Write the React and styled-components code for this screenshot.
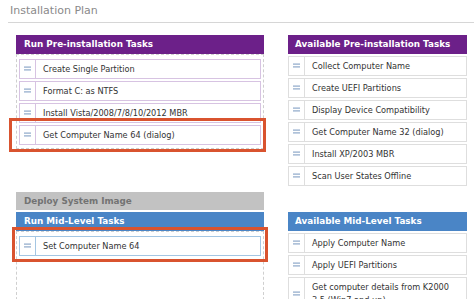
import React from "react";
import styled, { createGlobalStyle } from "styled-components";

const GlobalStyle = createGlobalStyle`
  html, body { margin: 0; padding: 0; background: #fff; }
  body { width: 474px; height: 299px; overflow: hidden; }
  * { box-sizing: border-box; }
`;

const Page = styled.div`
  position: relative;
  width: 474px;
  height: 299px;
  overflow: hidden;
  font-family: "DejaVu Sans", "Liberation Sans", sans-serif;
  color: #333;
`;

const Title = styled.div`
  margin-left: 8px;
  height: 23px;
  padding: 4px 0 0 2px;
  font-size: 11px;
  line-height: 14px;
  color: #8a8a8a;
  border-bottom: 1px solid #d6d6d6;
`;

const Columns = styled.div`
  display: flex;
  gap: 24px;
  padding-left: 16px;
  margin-top: 12px;
`;

const Column = styled.div`
  display: flex;
  flex-direction: column;
  width: ${(p) => p.$width}px;
`;

const Bar = styled.div`
  height: ${(p) => p.$h || 19}px;
  line-height: ${(p) => p.$h || 19}px;
  padding-left: ${(p) => p.$pad || 8}px;
  margin-top: ${(p) => p.$mt || 0}px;
  background: ${(p) => p.$bg};
  color: ${(p) => p.$fg || "#fff"};
  font-weight: bold;
  font-size: 8.8px;
  white-space: nowrap;
`;

const DropZone = styled.div`
  display: flex;
  flex-direction: column;
  gap: 2px;
  border: 1px dashed #cfcfcf;
  padding: 4px 2px 3px;
  min-height: ${(p) => p.$minH || 0}px;
`;

const List = styled.div`
  display: flex;
  flex-direction: column;
  gap: 2px;
  margin-top: 2px;
`;

const Row = styled.div`
  position: relative;
  display: flex;
  min-height: 20px;
  border: 1px solid ${(p) => p.$line};
  background: #fff;
`;

const Handle = styled.div`
  flex: 0 0 16px;
  display: flex;
  align-items: center;
  justify-content: center;
  border-right: 1px solid ${(p) => p.$line};
`;

const Label = styled.div`
  flex: 1;
  padding: ${(p) => (p.$tall ? "3px 4px 3px 7px" : "0 4px 0 7px")};
  font-size: 8.2px;
  line-height: ${(p) => (p.$tall ? "13px" : "18px")};
  color: #333;
  white-space: ${(p) => (p.$tall ? "normal" : "nowrap")};
`;

const Callout = styled.div`
  position: absolute;
  inset: ${(p) => p.$inset};
  border: 3px solid #d9532f;
  pointer-events: none;
  z-index: 2;
`;

const Grip = () => (
  <svg width="7" height="6" viewBox="0 0 7 6">
    <rect x="0" y="0.5" width="7" height="1.2" fill="#8ea8c9" />
    <rect x="0" y="3.3" width="7" height="1.2" fill="#8ea8c9" />
  </svg>
);

const Task = ({ text, line, sep, tall, mark }) => (
  <Row $line={line}>
    <Handle $line={sep || line}>
      <Grip />
    </Handle>
    <Label $tall={tall}>{text}</Label>
    {mark && <Callout $inset={mark} />}
  </Row>
);

const PURPLE = "#6c2089";
const BLUE = "#4a85c6";
const LAV = "#d7c3e2";
const GREY = "#dedede";
const SKY = "#a4c6e3";

export default function App() {
  return (
    <Page>
      <GlobalStyle />
      <Title>Installation Plan</Title>
      <Columns>
        <Column $width={248}>
          <Bar $bg={PURPLE}>Run Pre-installation Tasks</Bar>
          <DropZone>
            <Task line={LAV} text="Create Single Partition" />
            <Task line={LAV} text="Format C: as NTFS" />
            <Task line={LAV} text="Install Vista/2008/7/8/10/2012 MBR" />
            <Task
              line={LAV}
              text="Get Computer Name 64 (dialog)"
              mark="-8px -6px -8px -11px"
            />
          </DropZone>
          <Bar $bg="#c2c2c2" $fg="#737373" $h={18} $mt={43}>
            Deploy System Image
          </Bar>
          <Bar $bg={BLUE} $mt={2}>Run Mid-Level Tasks</Bar>
          <DropZone $minH={120}>
            <Task line={SKY} text="Set Computer Name 64" mark="-10px -8px -7px -8px" />
          </DropZone>
        </Column>
        <Column $width={179}>
          <Bar $bg={PURPLE} $pad={7}>Available Pre-installation Tasks</Bar>
          <List>
            <Task line={GREY} text="Collect Computer Name" />
            <Task line={GREY} text="Create UEFI Partitions" />
            <Task line={GREY} text="Display Device Compatibility" />
            <Task line={GREY} text="Get Computer Name 32 (dialog)" />
            <Task line={GREY} text="Install XP/2003 MBR" />
            <Task line={GREY} text="Scan User States Offline" />
          </List>
          <Bar $bg={BLUE} $pad={7} $mt={26}>Available Mid-Level Tasks</Bar>
          <List>
            <Task line={GREY} text="Apply Computer Name" />
            <Task line={GREY} text="Apply UEFI Partitions" />
            <Task
              line={GREY}
              tall
              text="Get computer details from K2000 3.5 (Win7 and up)"
            />
          </List>
        </Column>
      </Columns>
    </Page>
  );
}
